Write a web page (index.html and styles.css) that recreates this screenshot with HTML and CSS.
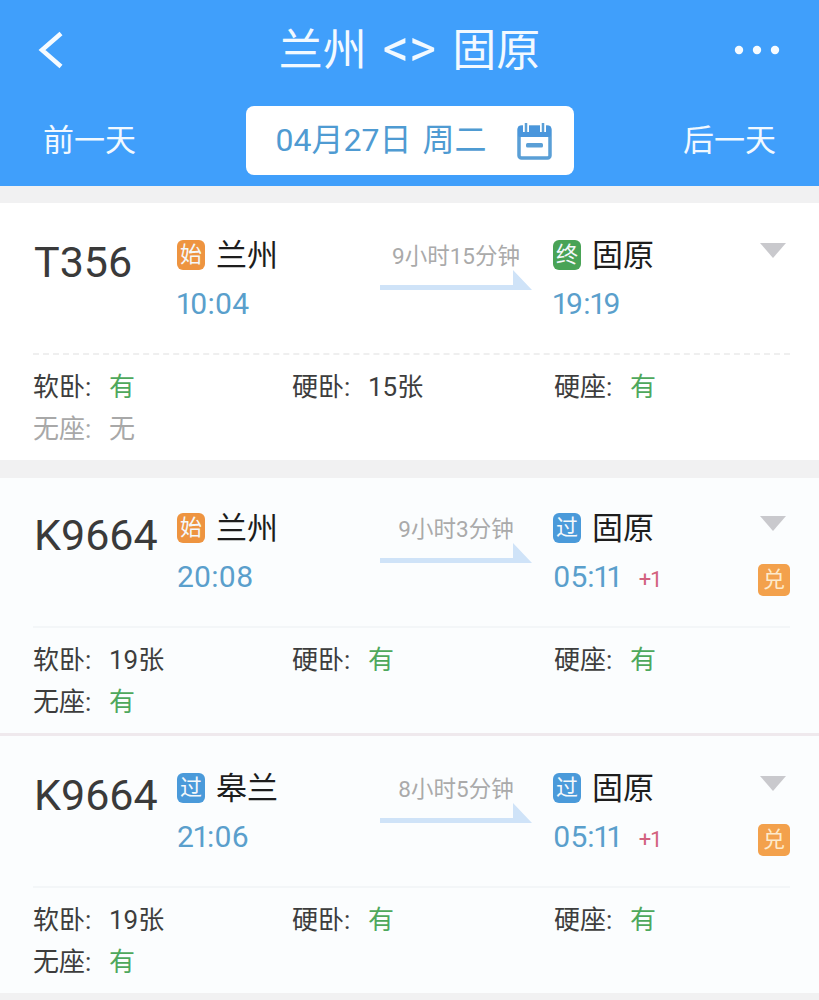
FILE: index.html
```html
<!DOCTYPE html>
<html>
<head>
    <meta name="viewport" content="width=device-width, initial-scale=1">
    <link rel="stylesheet" href="styles.css">
</head>

<body>

<div class="header">
    <div class="titlebar">
        <svg class="back" width="26" height="38" viewBox="0 0 26 38"><path d="M23 2.5 L4 19 L23 35.5" fill="none" stroke="#f6fbff" stroke-width="4.5"/></svg>
        <span class="title">兰州 <span class="arrows">&lt;&gt;</span> 固原</span>
        <svg class="more" width="46" height="10" viewBox="0 0 46 10"><circle cx="5" cy="5" r="4.2" fill="#f6fbff"/><circle cx="23" cy="5" r="4.2" fill="#f6fbff"/><circle cx="41" cy="5" r="4.2" fill="#f6fbff"/></svg>
    </div>
    <div class="datebar">
        <span class="daylink">前一天</span>
        <div class="datebox">
            <span class="datetext">04月27日 周二</span>
            <svg width="36" height="38" viewBox="0 0 36 38"><rect x="2" y="5" width="31" height="31" rx="2.5" fill="none" stroke="#5a9fd6" stroke-width="3.5"/><rect x="1" y="4" width="33" height="11" rx="2" fill="#4a96dc"/><path d="M9 0 V10 M26 0 V10" stroke="#fff" stroke-width="6"/><path d="M9 1 V10 M26 1 V10" stroke="#5a9fd6" stroke-width="2.5"/><rect x="9" y="21" width="17" height="4.5" rx="1.5" fill="#5a9fd6"/></svg>
        </div>
        <span class="daylink">后一天</span>
    </div>
</div>

<div class="train first">
    <div class="route">
        <div class="no">T356</div>
        <div class="stop">
            <div class="name"><span class="tag orange">始</span>兰州</div>
            <div class="time">10:04</div>
        </div>
        <div class="span">
            <div class="dur">9小时15分钟</div>
            <svg width="152" height="22" viewBox="0 0 152 22"><path d="M0 15 H133 V0 L152 20 H0 Z" fill="#cfe3f8"/></svg>
        </div>
        <div class="stop">
            <div class="name"><span class="tag green">终</span>固原</div>
            <div class="time">19:19</div>
        </div>
        <div class="side"><span class="caret"></span></div>
    </div>
    <div class="rule dashed"></div>
    <div class="seats">
        <div><span class="lab">软卧:</span><b class="yes">有</b></div>
        <div><span class="lab">硬卧:</span><b>15张</b></div>
        <div><span class="lab">硬座:</span><b class="yes">有</b></div>
        <div class="none"><span class="lab">无座:</span><b>无</b></div>
    </div>
</div>

<div class="train second tint">
    <div class="route">
        <div class="no">K9664</div>
        <div class="stop">
            <div class="name"><span class="tag orange">始</span>兰州</div>
            <div class="time">20:08</div>
        </div>
        <div class="span">
            <div class="dur">9小时3分钟</div>
            <svg width="152" height="22" viewBox="0 0 152 22"><path d="M0 15 H133 V0 L152 20 H0 Z" fill="#cfe3f8"/></svg>
        </div>
        <div class="stop">
            <div class="name"><span class="tag blue">过</span>固原</div>
            <div class="time">05:11<span class="plus">+1</span></div>
        </div>
        <div class="side"><span class="caret"></span><span class="dui">兑</span></div>
    </div>
    <div class="rule"></div>
    <div class="seats">
        <div><span class="lab">软卧:</span><b>19张</b></div>
        <div><span class="lab">硬卧:</span><b class="yes">有</b></div>
        <div><span class="lab">硬座:</span><b class="yes">有</b></div>
        <div><span class="lab">无座:</span><b class="yes">有</b></div>
    </div>
</div>

<div class="train third tint">
    <div class="route">
        <div class="no">K9664</div>
        <div class="stop">
            <div class="name"><span class="tag blue">过</span>皋兰</div>
            <div class="time">21:06</div>
        </div>
        <div class="span">
            <div class="dur">8小时5分钟</div>
            <svg width="152" height="22" viewBox="0 0 152 22"><path d="M0 15 H133 V0 L152 20 H0 Z" fill="#cfe3f8"/></svg>
        </div>
        <div class="stop">
            <div class="name"><span class="tag blue">过</span>固原</div>
            <div class="time">05:11<span class="plus">+1</span></div>
        </div>
        <div class="side"><span class="caret"></span><span class="dui">兑</span></div>
    </div>
    <div class="rule"></div>
    <div class="seats">
        <div><span class="lab">软卧:</span><b>19张</b></div>
        <div><span class="lab">硬卧:</span><b class="yes">有</b></div>
        <div><span class="lab">硬座:</span><b class="yes">有</b></div>
        <div><span class="lab">无座:</span><b class="yes">有</b></div>
    </div>
</div>

</body>
</html>
```

FILE: styles.css
```css
html, body {
    margin: 0;
    height: 1000px;
    overflow: hidden;
}

body {
    background-color: #f1f1f2;
    font-family: Roboto, "Noto Sans CJK SC", sans-serif;
    color: #333;
}

/* blue top area */
.header {
    height: 186px;
    background-color: #409ffb;
    color: #f2f9ff;
    box-sizing: border-box;
    padding: 24px 39px 0 38px;
}

.titlebar {
    display: flex;
    align-items: center;
    justify-content: space-between;
    height: 52px;
}

.back {
    margin-right: 21px;
}

.title {
    font-size: 44px;
    line-height: 52px;
    word-spacing: 5px;
}

.arrows {
    font-size: 52px;
}

.datebar {
    display: flex;
    align-items: center;
    justify-content: space-between;
    margin-top: 30px;
    padding: 0 4px 0 5px;
}

.daylink {
    font-size: 31px;
    line-height: 69px;
}

.datebox {
    display: flex;
    align-items: center;
    justify-content: space-between;
    box-sizing: border-box;
    width: 328px;
    height: 69px;
    padding: 0 21px 0 30px;
    background-color: #fff;
    border-radius: 8px;
    color: #4f9bd2;
    font-size: 32px;
}

.datetext {
    margin-bottom: 8px;
    word-spacing: 3px;
}

/* train cards */
.train {
    height: 257px;
    box-sizing: border-box;
    padding: 37px 29px 0 33px;
    background-color: #fff;
}

.tint {
    background-color: #fbfdfe;
}

.first {
    margin-top: 17px;
}

.second {
    margin-top: 18px;
    height: 255px;
    padding-top: 35px;
}

.third {
    height: 260px;
    border-top: 3px solid #efe9ed;
}

.route {
    display: flex;
    height: 113px;
}

.no {
    width: 144px;
    flex: none;
    font-size: 43px;
    line-height: 44px;
    color: #3a3a3a;
    text-indent: 1px;
}

.stop {
    width: 203px;
    flex: none;
}

.stop:nth-child(4) {
    width: 207px;
}

.name {
    display: flex;
    align-items: center;
    height: 30px;
    margin: -3px 0 3px;
    font-size: 31px;
    color: #1d1d1d;
}

.tag {
    display: block;
    width: 28px;
    height: 30px;
    margin: 6px 11px 0 0;
    border-radius: 6px;
    font-size: 22px;
    line-height: 29px;
    text-align: center;
    color: #f4f8fb;
}

.orange { background-color: #ee9440; }
.green { background-color: #49a356; }
.blue { background-color: #4a9ada; }

.time {
    margin-top: 21px;
    font-size: 30px;
    line-height: 32px;
    color: #5a9fcc;
    font-variant-numeric: proportional-nums;
}

.plus {
    margin-left: 18px;
    font-size: 22px;
    color: #d2627f;
}

.span {
    width: 173px;
    flex: none;
}

.dur {
    width: 152px;
    margin-top: 2px;
    text-align: center;
    font-size: 22.5px;
    line-height: 28px;
    color: #aaa;
}

.span svg {
    display: block;
}

.side {
    flex: 1;
    position: relative;
}

.caret {
    position: absolute;
    right: 4px;
    top: 3px;
    width: 0;
    height: 0;
    border-left: 13px solid transparent;
    border-right: 13px solid transparent;
    border-top: 15px solid #c9c9cd;
}

.dui {
    position: absolute;
    right: 0;
    top: 51px;
    width: 32px;
    height: 32px;
    border-radius: 5px;
    background-color: #f3a14c;
    color: #fdeacb;
    font-size: 22px;
    line-height: 32px;
    text-align: center;
}

.rule {
    height: 0;
    border-top: 2px solid #f3f6f8;
}

.dashed {
    border-top: 2px dashed #efefef;
}

.seats {
    display: grid;
    grid-template-columns: 259px 262px 1fr;
    grid-auto-rows: 42px;
    margin-top: 11px;
    font-size: 26px;
    line-height: 42px;
    color: #3d3d3d;
}

.lab {
    display: inline-block;
    width: 76px;
}

.seats b {
    font-weight: 400;
}

.seats .yes {
    color: #4ea85c;
}

.seats .none {
    color: #a8a8a8;
}
```
